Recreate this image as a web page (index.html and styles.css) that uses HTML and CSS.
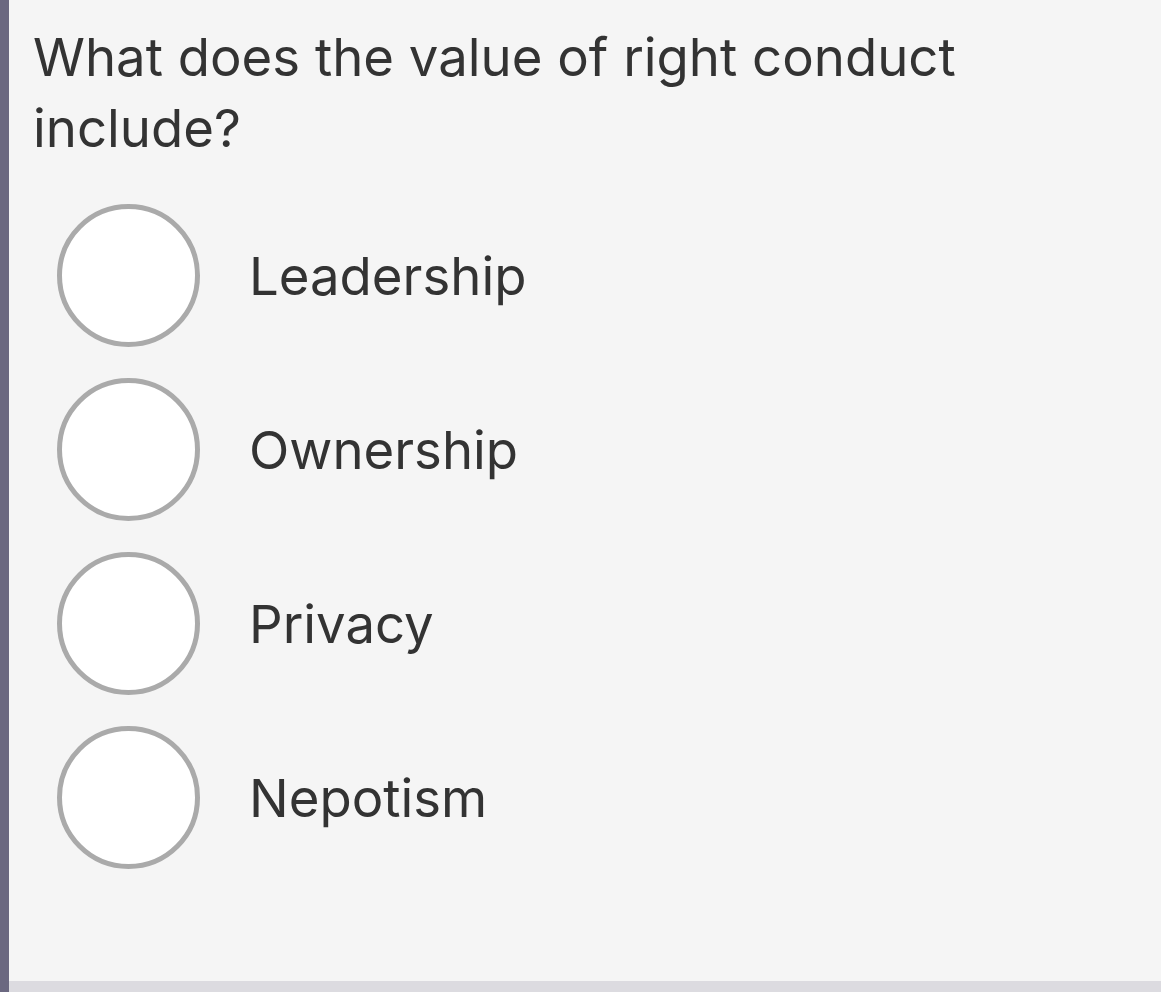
FILE: index.html
```html
<!DOCTYPE html>
<html lang="en">
  <head>
    <meta charset="UTF-8" />
    <meta name="viewport" content="width=device-width, initial-scale=1.0" />
    <title>Quiz</title>
    <link rel="stylesheet" href="styles.css">
  </head>
  <body>
    <div class="page">
      <div class="question">
        <h1>What does the value of right conduct include?</h1>
        <div class="options">
          <label class="option">
            <span class="radio"></span>
            <span class="option-text">Leadership</span>
          </label>
          <label class="option">
            <span class="radio"></span>
            <span class="option-text">Ownership</span>
          </label>
          <label class="option">
            <span class="radio"></span>
            <span class="option-text">Privacy</span>
          </label>
          <label class="option">
            <span class="radio"></span>
            <span class="option-text">Nepotism</span>
          </label>
        </div>
      </div>
      <div class="bottom-bar"></div>
    </div>
  </body>
</html>
```

FILE: styles.css
```css
body {
  margin: 0;
  font-family: Inter, "Noto Sans", sans-serif;
  background-color: #f5f5f5;
  color: #333333;
  overflow: hidden;
}

.page {
  display: flex;
  flex-direction: column;
  height: 992px;
  border-left: 9px solid #6b6880;
}

.question {
  flex: 1;
  padding: 22px 26px 0 24px;
}

h1 {
  margin: 0;
  font-size: 52.7px;
  font-weight: 400;
  line-height: 71px;
  max-width: 960px;
}

.options {
  display: flex;
  flex-direction: column;
  gap: 31px;
  margin-top: 40px;
  padding-left: 24px;
}

.option {
  display: flex;
  align-items: center;
  gap: 49px;
  cursor: pointer;
}

.radio {
  width: 133px;
  height: 133px;
  border: 5px solid #aaaaaa;
  border-radius: 50%;
  background-color: #ffffff;
  flex-shrink: 0;
}

.option-text {
  font-size: 52.7px;
}

.bottom-bar {
  height: 11px;
  background-color: #dcdbe0;
}
```
